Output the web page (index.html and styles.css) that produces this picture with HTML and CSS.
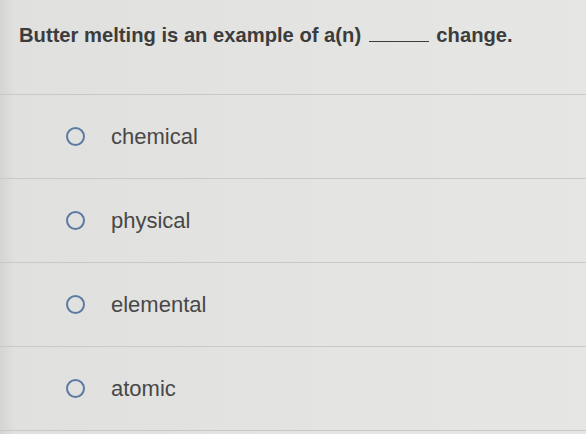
FILE: index.html
```html
<!DOCTYPE html>
<html>
<head>
<meta charset="utf-8">
<link rel="stylesheet" href="styles.css">
</head>
<body>
<div class="page">
  <div class="question">Butter melting is an example of a(n) <span class="blank"></span> change.</div>
  <ul class="options">
    <li class="option"><span class="radio"></span><span class="label">chemical</span></li>
    <li class="option"><span class="radio"></span><span class="label">physical</span></li>
    <li class="option"><span class="radio"></span><span class="label">elemental</span></li>
    <li class="option"><span class="radio"></span><span class="label">atomic</span></li>
  </ul>
</div>
</body>
</html>
```
FILE: styles.css
```css
html, body {
  margin: 0;
  padding: 0;
}
body {
  width: 586px;
  height: 434px;
  overflow: hidden;
  background: linear-gradient(90deg, #d4d4d2 0px, #e0e0de 14px, #e4e4e2 60%, #e6e6e4 100%);
  font-family: "Liberation Sans", Arial, sans-serif;
}
.page {
  display: flex;
  flex-direction: column;
}
.question {
  height: 95px;
  box-sizing: border-box;
  padding: 24px 0 0 19px;
  font-size: 20.2px;
  font-weight: bold;
  color: #3c3c3c;
  border-bottom: 1px solid #c9c9c7;
}
.blank {
  display: inline-block;
  width: 60px;
  height: 1px;
  border-bottom: 1.5px solid #3c3c3c;
  margin: 0 2px 0 2px;
  vertical-align: baseline;
}
.options {
  list-style: none;
  margin: 0;
  padding: 0;
}
.option {
  height: 83px;
  display: flex;
  align-items: center;
  border-bottom: 1px solid #c9c9c7;
  padding-left: 66px;
}
.radio {
  width: 15px;
  height: 15px;
  border: 2.5px solid #5a7aa3;
  border-radius: 50%;
  box-sizing: content-box;
  flex: none;
}
.label {
  margin-left: 26px;
  font-size: 22px;
  color: #484848;
}
```
